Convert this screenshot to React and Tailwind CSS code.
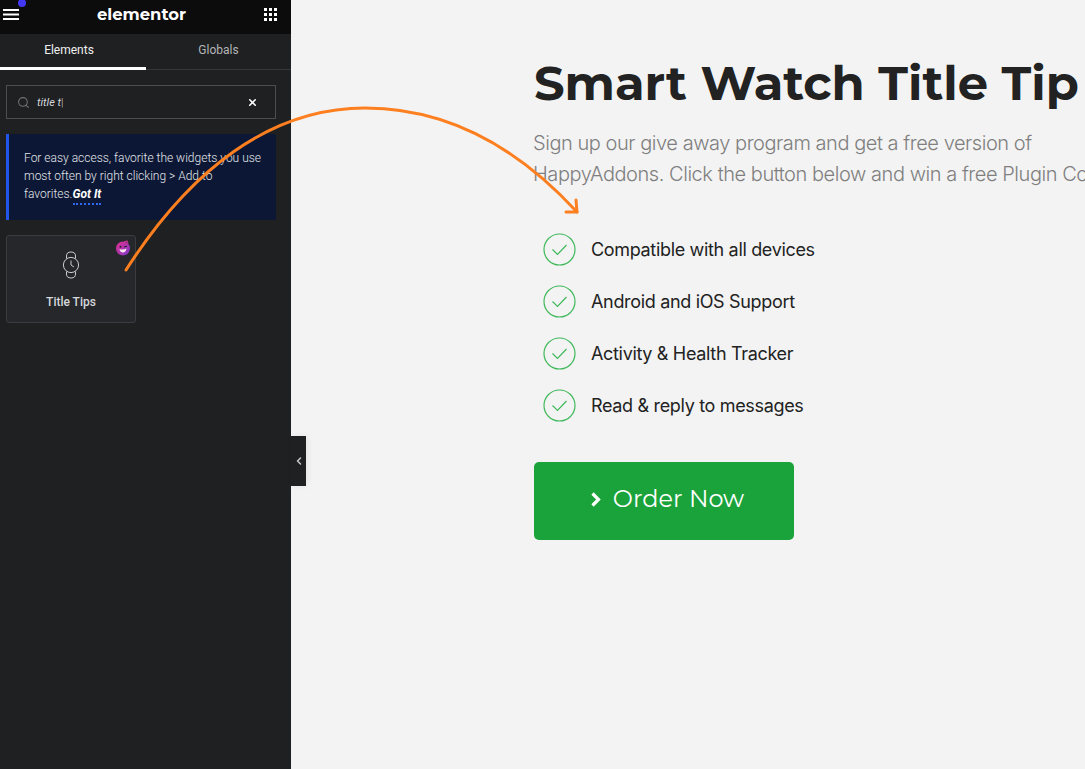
import React from 'react';
import { Search, X, ChevronLeft } from 'lucide-react';

const FEATURES = [
  'Compatible with all devices',
  'Android and iOS Support',
  'Activity & Health Tracker',
  'Read & reply to messages',
];

function HappyBadge() {
  return (
    <svg width="16" height="16" viewBox="0 0 16 16" className="absolute top-[4px] right-[4px]">
      <defs>
        <linearGradient id="hb" x1="0" y1="0" x2="1" y2="1">
          <stop offset="0" stopColor="#e5308f" />
          <stop offset="1" stopColor="#7a38c9" />
        </linearGradient>
      </defs>
      <circle cx="8" cy="8.5" r="7" fill="url(#hb)" />
      <path d="M9 2 L12 1 L13 3.5" fill="none" stroke="#c9388f" strokeWidth="1.1" />
      <circle cx="5.5" cy="6.8" r="1" fill="#2a2030" />
      <path d="M9 7 L12 6.2" stroke="#2a2030" strokeWidth="1.1" />
      <path d="M4.5 9 Q8 10.2 11.5 8.6 Q10.8 12.6 7.8 12.5 Q5 12.4 4.5 9 Z" fill="#f6e6f2" />
    </svg>
  );
}

function WatchIcon() {
  return (
    <svg width="18" height="30" viewBox="0 0 18 30" fill="none" stroke="#c9cbce" strokeWidth="1" className="shrink-0">
      <circle cx="9" cy="15" r="7.6" />
      <path d="M4.5 8.5 V6 Q4.5 2 9 2 Q13.5 2 13.5 6 V8.5" />
      <path d="M4.5 21.5 V24 Q4.5 28 9 28 Q13.5 28 13.5 24 V21.5" />
      <path d="M9 10.5 V15 L12 17" />
    </svg>
  );
}

function CheckCircle() {
  return (
    <svg width="33" height="33" viewBox="0 0 33 33" className="shrink-0">
      <circle cx="16.5" cy="16.5" r="15.5" fill="none" stroke="#3fb85a" strokeWidth="1.2" />
      <path d="M9.5 16.5 L14.5 21.5 L23.5 12" fill="none" stroke="#3fb85a" strokeWidth="1.2" />
    </svg>
  );
}

function Sidebar() {
  return (
    <aside className="w-[291px] shrink-0 bg-[#1f2022] font-['Roboto',sans-serif]">
      <div className="h-[34px] bg-[#0c0c0d] flex items-center justify-between pl-[3px] pr-[14px] pb-[5px] relative">
        <svg width="16" height="12" viewBox="0 0 16 12" fill="#ffffff">
          <rect x="0" y="0" width="16" height="2" />
          <rect x="0" y="4.5" width="16" height="2" />
          <rect x="0" y="9" width="16" height="2" />
        </svg>
        <span className="absolute top-[-1px] left-[18px] w-2 h-2 rounded-full bg-[#4338f5]" />
        <span className="text-white text-[16.4px] font-bold font-['Montserrat','Inter',sans-serif]">elementor</span>
        <svg width="13" height="13" viewBox="0 0 13 13" fill="#ffffff">
          {[0, 5, 10].map(y => [0, 5, 10].map(x => (
            <rect key={`${x}-${y}`} x={x} y={y} width="3" height="3" />
          )))}
        </svg>
      </div>
      <div className="flex h-[36px] border-b border-[#35373b]">
        <div className="w-[146px] h-[36px] border-b-[3px] border-white flex items-center justify-center pr-[8px] pb-[2px] text-[12px] text-[#f0f0f0]">Elements</div>
        <div className="flex-1 flex items-center justify-center pb-[4px] text-[12px] text-[#b4b5b7]">Globals</div>
      </div>
      <div className="px-[6px] pt-[15px]">
        <div className="w-[270px] h-[34px] border border-[#4a4d52] flex items-center pl-[10px] pr-[17px]">
          <Search size={13} className="text-[#6f7276]" />
          <span className="ml-[7px] flex-1 text-[11px] italic text-[#d5d8dc] leading-none">title t<span className="not-italic font-light">|</span></span>
          <X size={11} className="text-white" strokeWidth={3.5} />
        </div>
        <div className="w-[270px] h-[86px] mt-[15px] bg-[#0c1735] border-l-[3px] border-[#2256e8] rounded-r-[2px] pl-[15px] pt-[15px] text-[12px] leading-[18px] font-light text-[#e3e6ea]">
          <p>For easy access, favorite the widgets you use</p>
          <p>most often by right clicking &gt; Add to</p>
          <p>favorites.<span className="font-bold italic text-white border-b-2 border-dotted border-[#2f67f0] pb-[2px]">Got It</span></p>
        </div>
        <div className="relative w-[130px] h-[88px] mt-[15px] bg-[#26272b] border border-[#3a3c40] rounded-[3px] flex flex-col items-center pt-[14px]">
          <HappyBadge />
          <WatchIcon />
          <span className="mt-[13px] text-[12px] font-medium text-[#d5d8dc]">Title Tips</span>
        </div>
      </div>
    </aside>
  );
}

export default function App() {
  return (
    <div className="relative flex w-[1085px] h-[769px] overflow-hidden bg-[#f3f3f3]">
      <Sidebar />

      <main className="relative flex-1 min-w-0 pl-[243px] pt-[54px] overflow-hidden whitespace-nowrap">
        <h1 className="text-[48px] leading-[58px] font-bold text-[#222222] font-['Montserrat','Inter',sans-serif]">Smart Watch Title Tip</h1>
        <div className="mt-[16px] -ml-px text-[20px] leading-[31px] font-light tracking-[-0.45px] text-[#7f7f7f] font-['Inter',sans-serif]">
          <p>Sign up our give away program and get a free version of</p>
          <p>HappyAddons. Click the button below and win a free Plugin Copy</p>
        </div>
        <ul className="mt-[43px] ml-[9px] flex flex-col gap-[19px] font-['Inter',sans-serif]">
          {FEATURES.map(item => (
            <li key={item} className="flex items-center gap-[15px] text-[18px] tracking-[-0.33px] text-[#222222]">
              <CheckCircle />
              <span>{item}</span>
            </li>
          ))}
        </ul>
        <button className="mt-[40px] w-[260px] h-[78px] rounded-[5px] bg-[#1aa33b] flex items-center justify-center gap-[12px] pl-[7px] pb-[4px] text-white text-[24px] font-['Montserrat','Inter',sans-serif]">
          <svg width="10" height="15" viewBox="0 0 10 15" fill="none" stroke="#ffffff" strokeWidth="3.2">
            <path d="M1.5 1.5 L7.5 7.5 L1.5 13.5" />
          </svg>
          <span>Order Now</span>
        </button>
      </main>

      {/* collapse handle */}
      <div className="absolute left-[291px] top-[436px] w-[15px] h-[50px] bg-[#1f2022] flex items-center justify-center shadow-[2px_0_6px_rgba(0,0,0,0.06)]">
        <ChevronLeft size={12} className="text-[#c5c6c8]" strokeWidth={3} />
      </div>

      {/* orange annotation arrow */}
      <svg width="1085" height="769" viewBox="0 0 1085 769" className="absolute inset-0 pointer-events-none" fill="none">
        <path d="M126 270 C 190 170, 270 108, 365 108 C 450 108, 520 150, 577 212" stroke="#fd7f1f" strokeWidth="3" strokeLinecap="round" />
        <path d="M566 212 L577 212 L576 200" stroke="#fd7f1f" strokeWidth="3" strokeLinecap="round" strokeLinejoin="round" />
      </svg>
    </div>
  );
}
